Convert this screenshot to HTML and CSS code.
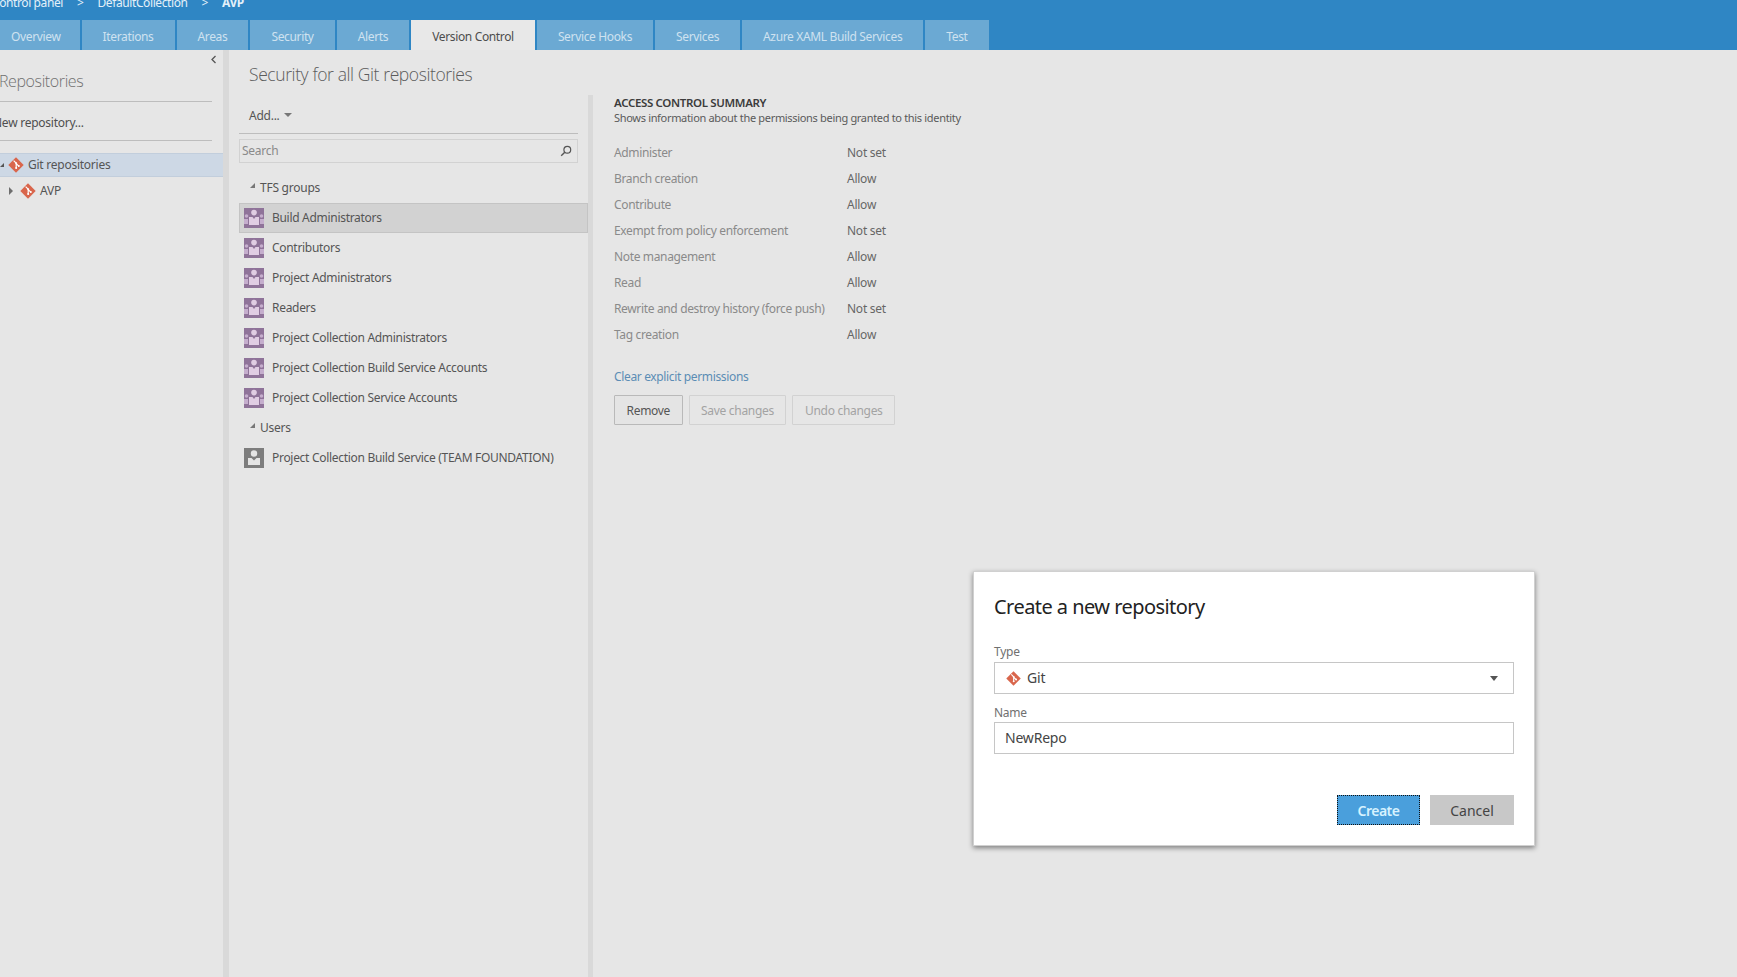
FILE: index.html
```html
<!DOCTYPE html>
<html lang="en">
<head>
<meta charset="utf-8">
<title>Version Control</title>
<link rel="stylesheet" href="styles.css">
</head>
<body>
<svg class="defs" width="0" height="0" aria-hidden="true">
  <symbol id="git" viewBox="0 0 16 16">
    <path d="M8 .3 15.700 8 8 15.700 .3 8Z" fill="#d9664c"/>
    <path d="M5.600 3.600 8.200 6.200M8.200 6.200V11.400M8.200 6.600 10.800 9.200" stroke="#fff" stroke-width="1.200" fill="none"/>
    <circle cx="8.200" cy="6.200" r="1" fill="#fff"/><circle cx="8.200" cy="11" r="1" fill="#fff"/><circle cx="10.800" cy="9" r="1" fill="#fff"/>
  </symbol>
  <symbol id="group" viewBox="0 0 20 20">
    <rect width="20" height="20" fill="#8f7399"/>
    <circle cx="10" cy="4.600" r="2.800" fill="#e0cde3"/>
    <path d="M5 9h3.500L10 11l1.500-2H15v8H5Z" fill="#e0cde3"/>
    <circle cx="2.500" cy="8" r="1.800" fill="#c5aecd"/><circle cx="17.500" cy="8" r="1.800" fill="#c5aecd"/>
    <path d="M0 11h4v5H0ZM16 11h4v5h-4Z" fill="#c5aecd"/>
  </symbol>
  <symbol id="user" viewBox="0 0 20 20">
    <rect width="20" height="20" fill="#7d7d7d"/>
    <circle cx="10" cy="5.500" r="3.200" fill="#e4e4e4"/>
    <path d="M4 10h3.500L10 12.500 12.500 10H16v7H4Z" fill="#e4e4e4"/>
  </symbol>
</svg>

<header class="topbar">
  <nav class="crumbs">
    <span>Control panel</span><span class="sep">&gt;</span><span>DefaultCollection</span><span class="sep">&gt;</span><strong>AVP</strong>
  </nav>
  <nav class="tabs">
    <a class="tab t-overview">Overview</a>
    <a class="tab">Iterations</a>
    <a class="tab">Areas</a>
    <a class="tab">Security</a>
    <a class="tab">Alerts</a>
    <a class="tab active">Version Control</a>
    <a class="tab">Service Hooks</a>
    <a class="tab">Services</a>
    <a class="tab">Azure XAML Build Services</a>
    <a class="tab">Test</a>
  </nav>
</header>

<div class="workspace">
  <aside class="sidebar">
    <span class="collapse">
      <svg width="7" height="9" viewBox="0 0 7 9"><path d="M5.500 1 2 4.500 5.500 8" fill="none" stroke="#555" stroke-width="1.300"/></svg>
    </span>
    <h2 class="side-title">Repositories</h2>
    <div class="side-action">New repository...</div>
    <div class="tree-row selected">
      <i class="tri down"></i>
      <svg class="git"><use href="#git"/></svg>
      <span>Git repositories</span>
    </div>
    <div class="tree-row child">
      <i class="tri right"></i>
      <svg class="git"><use href="#git"/></svg>
      <span>AVP</span>
    </div>
  </aside>

  <main class="main">
    <h1 class="page-title">Security for all Git repositories</h1>
    <div class="columns">
      <section class="identities">
        <div class="add">Add...<i class="caret"></i></div>
        <div class="search">
          <span>Search</span>
          <svg width="12" height="12" viewBox="0 0 12 12"><circle cx="7.300" cy="4.700" r="3.400" fill="none" stroke="#555" stroke-width="1.200"/><path d="M4.800 7.200 1.200 10.800" stroke="#555" stroke-width="1.400"/></svg>
        </div>
        <div class="group-head"><i class="corner"></i>TFS groups</div>
        <div class="id-row current"><svg class="id-icon"><use href="#group"/></svg>Build Administrators</div>
        <div class="id-row"><svg class="id-icon"><use href="#group"/></svg>Contributors</div>
        <div class="id-row"><svg class="id-icon"><use href="#group"/></svg>Project Administrators</div>
        <div class="id-row"><svg class="id-icon"><use href="#group"/></svg>Readers</div>
        <div class="id-row"><svg class="id-icon"><use href="#group"/></svg>Project Collection Administrators</div>
        <div class="id-row"><svg class="id-icon"><use href="#group"/></svg>Project Collection Build Service Accounts</div>
        <div class="id-row"><svg class="id-icon"><use href="#group"/></svg>Project Collection Service Accounts</div>
        <div class="group-head"><i class="corner"></i>Users</div>
        <div class="id-row"><svg class="id-icon"><use href="#user"/></svg>Project Collection Build Service (TEAM FOUNDATION)</div>
      </section>

      <section class="summary">
        <h3 class="sum-title">ACCESS CONTROL SUMMARY</h3>
        <p class="sum-sub">Shows information about the permissions being granted to this identity</p>
        <dl class="perms">
          <dt>Administer</dt><dd>Not set</dd>
          <dt>Branch creation</dt><dd>Allow</dd>
          <dt>Contribute</dt><dd>Allow</dd>
          <dt>Exempt from policy enforcement</dt><dd>Not set</dd>
          <dt>Note management</dt><dd>Allow</dd>
          <dt>Read</dt><dd>Allow</dd>
          <dt>Rewrite and destroy history (force push)</dt><dd>Not set</dd>
          <dt>Tag creation</dt><dd>Allow</dd>
        </dl>
        <a class="clear">Clear explicit permissions</a>
        <div class="actions">
          <button class="btn">Remove</button>
          <button class="btn off">Save changes</button>
          <button class="btn off">Undo changes</button>
        </div>
      </section>
    </div>
  </main>
</div>

<div class="dialog">
  <h2 class="dlg-title">Create a new repository</h2>
  <label class="dlg-label">Type</label>
  <div class="field select">
    <svg class="git-lg"><use href="#git"/></svg>
    <span class="grow">Git</span>
    <i class="sel-caret"></i>
  </div>
  <label class="dlg-label name">Name</label>
  <div class="field">NewRepo</div>
  <div class="dlg-actions">
    <button class="dbtn primary">Create</button>
    <button class="dbtn">Cancel</button>
  </div>
</div>
</body>
</html>
```
FILE: styles.css
```css
* { box-sizing: border-box; }
html, body { height: 100%; }
body {
  margin: 0;
  overflow: hidden;
  background: #e6e6e6;
  color: #4f4f4f;
  font: 12px/16px "Noto Sans", "Open Sans", sans-serif;
  letter-spacing: -0.25px;
  display: flex;
  flex-direction: column;
}
.defs { position: absolute; }
.topbar { background: #2f86c4; height: 50px; flex: none; overflow: hidden; }
.crumbs {
  height: 20px;
  margin-top: -5px;
  margin-left: -8px;
  color: #e3f0f9;
  display: flex;
  gap: 14px;
  letter-spacing: -0.4px;
}
.crumbs strong { font-weight: 700; }
.tabs { display: flex; height: 30px; margin-top: 5px; gap: 2px; letter-spacing: -0.35px; }
.tab {
  background: #6ba9d3;
  color: #cfe2f0;
  padding: 0 21px;
  line-height: 33px;
  white-space: nowrap;
}
.t-overview { padding-left: 11px; padding-right: 19px; }
.tab.active { background: #e8e8e8; color: #4d4d4d; }

.workspace { flex: 1; display: flex; min-height: 0; }
.sidebar {
  width: 229px;
  flex: none;
  border-right: 6px solid #d9d9d9;
  position: relative;
  padding-top: 21px;
}
.collapse { position: absolute; left: 210px; top: 5px; line-height: 0; }
.side-title {
  margin: 0 0 0 -1px;
  font-family: "Open Sans", sans-serif;
  font-size: 16px;
  line-height: 20px;
  font-weight: 300;
  letter-spacing: -0.4px;
  color: #707070;
  padding: 0 0 10px;
  border-bottom: 1px solid #bdbdbd;
  width: 213px;
}
.side-action {
  margin-left: -1px;
  width: 213px;
  height: 39px;
  line-height: 42px;
  border-bottom: 1px solid #bdbdbd;
  margin-bottom: 12px;
  white-space: nowrap;
  overflow: hidden;
  text-indent: -6px;
}
.tree-row { height: 24px; display: flex; align-items: center; white-space: nowrap; color: #555; }
.tree-row .git { width: 16px; height: 16px; margin-left: 4px; margin-right: 4px; flex: none; }
.tree-row.selected { background: #cdd8e5; border: solid #c2cedc; border-width: 1px 0; }
.tree-row.child { height: 28px; padding-left: 9px; }
.tree-row.child .git { margin-left: 7px; }
.tri { display: block; width: 0; height: 0; flex: none; }
.tri.down { border-bottom: 4px solid #555; border-left: 4px solid transparent; }
.tri.right { border-left: 4px solid #6e6e6e; border-top: 4px solid transparent; border-bottom: 4px solid transparent; }

.main { flex: 1; min-width: 0; display: flex; flex-direction: column; }
.page-title {
  margin: 12px 0 0 20px;
  font-family: "Open Sans", sans-serif;
  font-size: 17.5px;
  line-height: 24px;
  font-weight: 300;
  letter-spacing: -0.4px;
  color: #5c5c5c;
  height: 33px;
}
.columns { display: flex; flex: 1; min-height: 0; padding-left: 10px; }
.identities { width: 349px; flex: none; padding-top: 11px; }
.add { height: 27px; margin-left: 10px; line-height: 20px; display: flex; align-items: flex-start; color: #555; }
.caret {
  margin: 7px 0 0 4px;
  border-top: 4px solid #777;
  border-left: 4px solid transparent;
  border-right: 4px solid transparent;
}
.search {
  width: 339px;
  height: 40px;
  border-top: 1px solid #bdbdbd;
  padding-top: 5px;
  position: relative;
}
.search span {
  display: flex; height: 24px; border: 1px solid #d2d2d2; padding-left: 2px; color: #8a8a8a; align-items: center;
}
.search svg { position: absolute; right: 6px; top: 11px; }
.group-head { height: 30px; line-height: 30px; padding-left: 21px; position: relative; color: #555; }
.corner {
  position: absolute; left: 11px; top: 10px;
  border-bottom: 5px solid #777; border-left: 5px solid transparent;
}
.id-row {
  height: 30px;
  padding-left: 5px;
  display: flex;
  align-items: center;
  gap: 8px;
  white-space: nowrap;
  color: #555;
  letter-spacing: -0.3px;
}
.id-row.current { background: #d2d2d2; border: 1px solid #c4c4c4; padding-left: 4px; }
.id-icon { width: 20px; height: 20px; flex: none; }

.summary { flex: 1; border-left: 5px solid #d9d9d9; padding: 0 0 0 21px; }
.sum-title { margin: 0; font-size: 11.5px; line-height: 16px; font-weight: 600; letter-spacing: -0.35px; color: #3c3c3c; }
.sum-sub { margin: 0; font-size: 11px; line-height: 14px; letter-spacing: -0.32px; color: #5a5a5a; }
.perms {
  margin: 15px 0 0;
  display: grid;
  grid-template-columns: 233px 1fr;
  grid-auto-rows: 26px;
  align-items: center;
}
.perms dt { color: #8a8a8a; white-space: nowrap; letter-spacing: -0.35px; }
.perms dd { margin: 0; color: #666; }
.clear { display: block; margin-top: 21px; color: #5b8db5; height: 26px; line-height: 16px; letter-spacing: -0.35px; }
.actions { display: flex; gap: 6px; }
.btn {
  height: 30px;
  padding: 2px 11.5px 0;
  font: inherit;
  letter-spacing: -0.3px;
  color: #555;
  background: #e4e4e4;
  border: 1px solid #b9b9b9;
  border-radius: 1px;
}
.btn.off { color: #a3a3a3; border-color: #d2d2d2; background: #e6e6e6; }

.dialog {
  position: absolute;
  left: 973px;
  top: 571px;
  width: 562px;
  height: 275px;
  background: #fff;
  border: 1px solid #d0d0d0;
  box-shadow: 0 2px 5px rgba(0,0,0,.45);
  padding: 21px 20px 0 20px;
  display: flex;
  flex-direction: column;
}
.dlg-title {
  margin: 0 0 23px;
  font-size: 20px;
  line-height: 28px;
  font-weight: 400;
  letter-spacing: -0.55px;
  color: #222;
}
.dlg-label { font-size: 12px; line-height: 16px; color: #707070; height: 18px; }
.dlg-label.name { margin-top: 11px; height: 17px; }
.field {
  height: 32px;
  border: 1px solid #c6c6c6;
  display: flex;
  align-items: center;
  padding-left: 10px;
  font-size: 14px;
  color: #444;
  letter-spacing: -0.2px;
  flex: none;
}
.git-lg { width: 15px; height: 15px; margin: 0 6px 0 1px; flex: none; }
.grow { flex: 1; }
.sel-caret {
  margin-right: 15px;
  border-top: 5px solid #555;
  border-left: 4px solid transparent;
  border-right: 4px solid transparent;
}
.dlg-actions { margin-top: auto; margin-bottom: 20px; display: flex; justify-content: flex-end; gap: 10px; }
.dbtn {
  width: 84px;
  height: 30px;
  font: 600 14px "Noto Sans", sans-serif;
  background: #c8c8c8;
  color: #444;
  border: 0;
  padding: 0;
}
.dbtn:last-child { font-weight: 400; }
.dbtn.primary { width: 83px; background: #4a9fdc; color: #d6f2ff; letter-spacing: -0.5px; outline: 1px dotted #111; outline-offset: -1px; }
```
